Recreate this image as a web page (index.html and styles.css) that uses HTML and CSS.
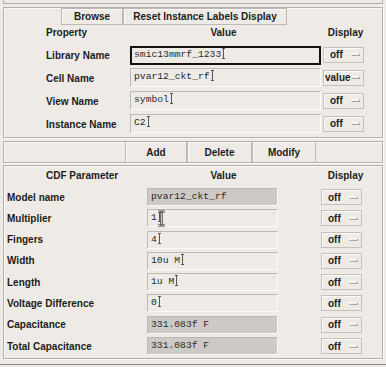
FILE: index.html
```html
<!DOCTYPE html>
<html lang="en">
<head>
	<meta charset="UTF-8">
	<title>Edit Instance Properties</title>
	<link rel="stylesheet" href="styles.css">
</head>
<body>
	<div class="top"></div>

	<div class="frame props">
		<div class="btnrow">
			<button class="btn browse">Browse</button>
			<button class="btn reset">Reset Instance Labels Display</button>
		</div>
		<div class="hdr"><span>Property</span><span class="c">Value</span><span class="c">Display</span></div>
		<div class="rows">
			<label>Library Name</label>
			<div class="field focus">smic13mmrf_1233<i class="caret"></i></div>
			<div class="opt">off<b></b></div>

			<label>Cell Name</label>
			<div class="field">pvar12_ckt_rf<i class="caret"></i></div>
			<div class="opt val">value<b></b></div>

			<label>View Name</label>
			<div class="field">symbol<i class="caret"></i></div>
			<div class="opt">off<b></b></div>

			<label>Instance Name</label>
			<div class="field">C2<i class="caret"></i></div>
			<div class="opt">off<b></b></div>
		</div>
	</div>

	<div class="frame bar">
		<button class="btn add">Add</button>
		<button class="btn del">Delete</button>
		<button class="btn mod">Modify</button>
	</div>

	<div class="frame params">
		<div class="hdr"><span>CDF Parameter</span><span class="c">Value</span><span class="c">Display</span></div>
		<div class="rows">
			<label>Model name</label>
			<div class="field ro">pvar12_ckt_rf</div>
			<div class="opt">off<b></b></div>

			<label>Multiplier</label>
			<div class="field">1<i class="caret"></i>
				<svg class="ibeam" width="9" height="17" viewBox="0 0 9 17"><path d="M1 1.5h2.5l1 1 1-1H8M4.5 2.5v12M1 15.5h2.5l1-1 1 1H8" fill="none" stroke="#222" stroke-width="2.2"/><path d="M1 1.5h2.5l1 1 1-1H8M4.5 2.5v12M1 15.5h2.5l1-1 1 1H8" fill="none" stroke="#c8c4c0" stroke-width="1"/></svg>
			</div>
			<div class="opt">off<b></b></div>

			<label>Fingers</label>
			<div class="field">4<i class="caret"></i></div>
			<div class="opt">off<b></b></div>

			<label>Width</label>
			<div class="field">10u M<i class="caret"></i></div>
			<div class="opt">off<b></b></div>

			<label>Length</label>
			<div class="field">1u M<i class="caret"></i></div>
			<div class="opt">off<b></b></div>

			<label>Voltage Difference</label>
			<div class="field">0<i class="caret"></i></div>
			<div class="opt">off<b></b></div>

			<label>Capacitance</label>
			<div class="field ro">331.083f F</div>
			<div class="opt">off<b></b></div>

			<label>Total Capacitance</label>
			<div class="field ro">331.083f F</div>
			<div class="opt">off<b></b></div>
		</div>
	</div>

	<div class="bottom"></div>
</body>
</html>
```

FILE: styles.css
```css
*{
	margin: 0;
	padding: 0;
	box-sizing: border-box;
}
body{
	background: #eeebe7;
	font-family: 'Liberation Sans', Arial, sans-serif;
	font-size: 10px;
	font-weight: bold;
	color: #1c1c1c;
}
/* strip of the panel above */
.top{
	height: 4px;
	margin: 0 3px;
	border: 1px solid #b2aeaa;
	border-top: 0;
}
.frame{
	margin: 3px 3px 0;
	border: 1px solid #b4b0ac;
	box-shadow: inset 1px 1px 0 #fbfaf9, 1px 1px 0 #fbfaf9;
}
.props{
	padding-bottom: 4px;
}
.params{
	margin-top: 2px;
	padding-bottom: 3px;
}
.btn{
	font: inherit;
	color: inherit;
	background: #eeebe7;
	border: 1px solid #bdb9b5;
	box-shadow: inset 1px 1px 0 #fbfaf9;
}
.btnrow{
	display: flex;
	padding-left: 57px;
}
.btnrow .btn{
	height: 17px;
}
.browse{ width: 62px; }
.reset{ width: 164px; }

.bar{
	display: flex;
	height: 22px;
	padding-left: 121px;
}
.bar .btn{
	height: 20px;
	border-top: 0;
	border-bottom: 0;
}
.add{ width: 62px; }
.del{ width: 65px; }
.mod{ width: 64px; }

/* column titles, same place in both frames */
.hdr{
	display: grid;
	grid-template-columns: 82px 191px 50px;
	padding-left: 42px;
	height: 16px;
	line-height: 16px;
}
.hdr .c{
	text-align: center;
}
.hdr .c:last-child{
	padding-left: 3px;
}
.params .hdr{
	margin-top: 2px;
}

.rows{
	display: grid;
	align-items: center;
	margin-top: 4px;
}
.props .rows{
	grid-template-columns: 82px 191px 41px;
	grid-auto-rows: 19px;
	column-gap: 2px;
	row-gap: 4px;
	padding-left: 42px;
}
.props .rows label{
	padding-top: 2px;
}
.params .rows{
	grid-template-columns: 140px 174px 41px;
	grid-auto-rows: 18px;
	row-gap: 3.3px;
	padding-left: 3px;
}

.field{
	position: relative;
	height: 100%;
	padding-left: 3px;
	font-family: 'Liberation Mono', 'Courier New', monospace;
	font-size: 9.7px;
	font-weight: normal;
	line-height: 16px;
	color: #2a2a2a;
	border: 1px solid;
	border-color: #bcb8b4 #fbfaf9 #fbfaf9 #bcb8b4;
	white-space: nowrap;
}
.params .field{
	width: 131px;
	line-height: 15px;
}
.field.ro{
	background: #cdc9c5;
}
.field.focus{
	border: 2px solid #111;
	line-height: 14px;
	padding-left: 2px;
	margin-top: 2px;
}
.caret{
	display: inline-block;
	vertical-align: -2px;
	width: 3px;
	height: 11px;
	margin-left: 1px;
	border-top: 1px solid #555;
	border-bottom: 1px solid #555;
	background: linear-gradient(#555, #555) center / 1px 100% no-repeat;
}
.ibeam{
	position: absolute;
	left: 9px;
	top: 0;
}

/* option menu buttons in the Display column */
.opt{
	display: flex;
	align-items: center;
	height: 16px;
	padding-left: 6px;
	border: 1px solid #c4c0bc;
	box-shadow: inset 1px 1px 0 #fbfaf9;
	font-size: 10px;
}
.opt.val{
	padding-left: 1px;
}
.opt b{
	width: 9px;
	height: 3px;
	margin-left: auto;
	margin-right: 3px;
	border: 1px solid;
	border-color: #fbfaf9 #aaa6a2 #aaa6a2 #fbfaf9;
}

.bottom{
	margin-top: 5px;
	border-top: 1px solid #8d8985;
	height: 3px;
}
```
